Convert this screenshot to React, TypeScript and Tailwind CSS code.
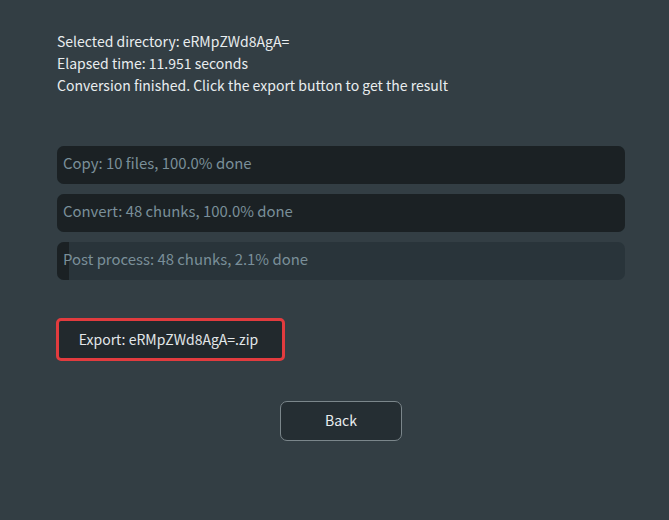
import React from "react";

const steps = [
  { label: "Copy: 10 files, 100.0% done", pct: 100 },
  { label: "Convert: 48 chunks, 100.0% done", pct: 100 },
  { label: "Post process: 48 chunks, 2.1% done", pct: 2.1 },
];

export default function App() {
  return (
    <div
      className="min-h-[520px] w-full bg-[#333e44] text-[14px] text-[#e9edef]"
      style={{ fontFamily: '"Noto Sans CJK JP", "Noto Sans", sans-serif' }}
    >
      <div className="ml-[57px] w-[568px] pt-[30px]">
        <div className="leading-[22px]">
          <p>Selected directory: eRMpZWd8AgA=</p>
          <p>Elapsed time: 11.951 seconds</p>
          <p>Conversion finished. Click the export button to get the result</p>
        </div>

        <div className="mt-[50px] flex flex-col gap-[10px]">
          {steps.map((s) => (
            <div
              key={s.label}
              className="relative h-[38px] overflow-hidden rounded-[7px] bg-[#29343a]"
            >
              <div
                className="absolute inset-y-0 left-0 bg-[#1b2124]"
                style={{ width: `${s.pct}%` }}
              />
              <span className="relative flex h-full items-center pb-[4px] pl-[6px] text-[14.9px] text-[#7a8f99]">
                {s.label}
              </span>
            </div>
          ))}
        </div>

        <button className="mt-[38px] flex h-[43px] w-[229px] -ml-px items-center justify-center rounded-[5px] border-[3px] border-[#e23b3e] bg-[#22292d] pr-[4px] text-[#e3e7e9]">
          Export: eRMpZWd8AgA=.zip
        </button>

        <div className="mt-[40px] flex justify-center">
          <button className="h-[40px] w-[122px] rounded-[7px] border border-[#7b868b] bg-[#252e33] pb-[2px] text-[#e9edef]">
            Back
          </button>
        </div>
      </div>
    </div>
  );
}
